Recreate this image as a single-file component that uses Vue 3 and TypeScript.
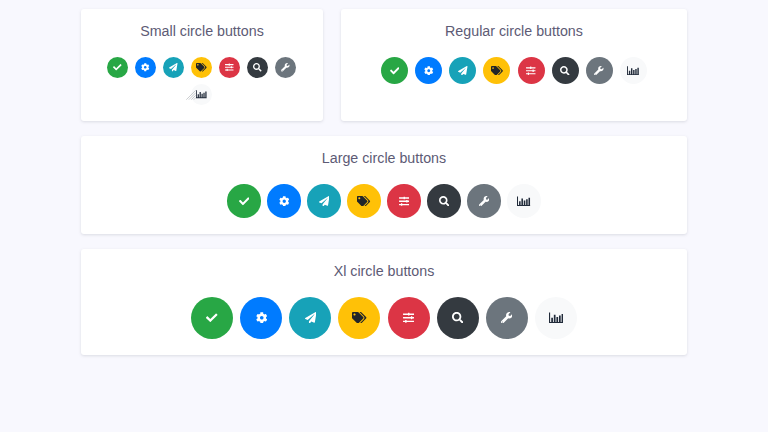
<script setup lang="ts">
interface Icon { name: string; bg: string; fg: string; vb: string; d: string }
const paths: Icon[] = [
  { name: 'check', bg: '#28a745', fg: '#fff', vb: '0 0 512 512', d: 'M173.898 439.404l-166.4-166.4c-9.997-9.997-9.997-26.206 0-36.204l36.203-36.204c9.997-9.998 26.207-9.998 36.204 0L192 312.69 432.095 72.596c9.997-9.997 26.207-9.997 36.204 0l36.203 36.204c9.997 9.997 9.997 26.206 0 36.204l-294.4 294.401c-9.998 9.997-26.207 9.997-36.204-.001z' },
  { name: 'cog', bg: '#007bff', fg: '#fff', vb: '0 0 512 512', d: 'M487.4 315.7l-42.6-24.6c4.3-23.2 4.3-47 0-70.2l42.6-24.6c4.9-2.8 7.1-8.6 5.5-14-11.1-35.6-30-67.8-54.7-94.6-3.8-4.1-10-5.1-14.8-2.3L380.8 110c-17.9-15.4-38.5-27.3-60.8-35.1V25.8c0-5.6-3.9-10.5-9.4-11.7-36.7-8.2-74.3-7.8-109.2 0-5.5 1.2-9.4 6.1-9.4 11.7V75c-22.2 7.9-42.8 19.8-60.8 35.1L88.7 85.5c-4.9-2.8-11-1.9-14.8 2.3-24.7 26.7-43.6 58.9-54.7 94.6-1.7 5.4.6 11.2 5.5 14L67.3 221c-4.3 23.2-4.3 47 0 70.2l-42.6 24.6c-4.9 2.8-7.1 8.6-5.5 14 11.1 35.6 30 67.8 54.7 94.6 3.8 4.1 10 5.1 14.8 2.3l42.6-24.6c17.9 15.4 38.5 27.3 60.8 35.1v49.2c0 5.6 3.9 10.5 9.4 11.7 36.7 8.2 74.3 7.8 109.2 0 5.5-1.2 9.4-6.1 9.4-11.7v-49.2c22.2-7.9 42.8-19.8 60.8-35.1l42.6 24.6c4.9 2.8 11 1.9 14.8-2.3 24.7-26.7 43.6-58.9 54.7-94.6 1.5-5.5-.7-11.3-5.6-14.1zM256 336c-44.1 0-80-35.9-80-80s35.9-80 80-80 80 35.9 80 80-35.9 80-80 80z' },
  { name: 'plane', bg: '#17a2b8', fg: '#fff', vb: '0 0 512 512', d: 'M476 3.2L12.5 270.6c-18.1 10.4-15.8 35.6 2.2 43.2L121 358.4l287.3-253.2c5.5-4.9 13.3 2.6 8.6 8.3L176 407v80.5c0 23.6 28.5 32.9 42.5 15.8L282 426l124.6 52.2c14.2 6 30.4-2.9 33-18.2l72-432C515 7.8 493.3-6.8 476 3.2z' },
  { name: 'tags', bg: '#ffc107', fg: '#212529', vb: '0 0 640 512', d: 'M497.941 225.941L286.059 14.059A48 48 0 0 0 252.118 0H48C21.49 0 0 21.49 0 48v204.118a48 48 0 0 0 14.059 33.941l211.882 211.882c18.744 18.745 49.136 18.746 67.882 0l204.118-204.118c18.745-18.745 18.745-49.137 0-67.882zM112 160c-26.51 0-48-21.49-48-48s21.49-48 48-48 48 21.49 48 48-21.49 48-48 48zm513.941 133.823L421.823 497.941c-18.745 18.745-49.137 18.745-67.882 0l-.36-.36L527.64 323.522c16.999-16.999 26.36-39.6 26.36-63.64s-9.362-46.641-26.36-63.64L331.397 0h48.721a48 48 0 0 1 33.941 14.059l211.882 211.882c18.745 18.745 18.745 49.137 0 67.882z' },
  { name: 'sliders', bg: '#dc3545', fg: '#fff', vb: '0 0 512 512', d: 'M496 384H160v-16c0-8.8-7.2-16-16-16h-32c-8.8 0-16 7.2-16 16v16H16c-8.8 0-16 7.2-16 16v32c0 8.8 7.2 16 16 16h80v16c0 8.8 7.2 16 16 16h32c8.8 0 16-7.2 16-16v-16h336c8.8 0 16-7.2 16-16v-32c0-8.8-7.2-16-16-16zm0-160h-80v-16c0-8.8-7.2-16-16-16h-32c-8.8 0-16 7.2-16 16v16H16c-8.8 0-16 7.2-16 16v32c0 8.8 7.2 16 16 16h336v16c0 8.8 7.2 16 16 16h32c8.8 0 16-7.2 16-16v-16h80c8.8 0 16-7.2 16-16v-32c0-8.8-7.2-16-16-16zm0-160H288V48c0-8.8-7.2-16-16-16h-32c-8.8 0-16 7.2-16 16v16H16C7.2 64 0 71.2 0 80v32c0 8.8 7.2 16 16 16h208v16c0 8.8 7.2 16 16 16h32c8.8 0 16-7.2 16-16v-16h208c8.8 0 16-7.2 16-16V80c0-8.8-7.2-16-16-16z' },
  { name: 'search', bg: '#343a40', fg: '#fff', vb: '0 0 512 512', d: 'M505 442.7L405.3 343c-4.5-4.5-10.6-7-17-7H372c27.6-35.3 44-79.7 44-128C416 93.1 322.9 0 208 0S0 93.1 0 208s93.1 208 208 208c48.3 0 92.7-16.4 128-44v16.3c0 6.4 2.5 12.5 7 17l99.7 99.7c9.4 9.4 24.6 9.4 33.9 0l28.3-28.3c9.4-9.4 9.4-24.6.1-34zM208 336c-70.7 0-128-57.2-128-128 0-70.7 57.2-128 128-128 70.7 0 128 57.2 128 128 0 70.7-57.2 128-128 128z' },
  { name: 'wrench', bg: '#6c757d', fg: '#fff', vb: '0 0 512 512', d: 'M507.73 109.1c-2.24-9.03-13.54-12.09-20.12-5.51l-74.36 74.36-67.88-11.31-11.31-67.88 74.36-74.36c6.62-6.62 3.43-17.9-5.66-20.16-47.38-11.74-99.55.91-136.58 37.93-39.64 39.64-50.55 97.1-34.05 147.2L18.74 402.76c-24.99 24.99-24.99 65.51 0 90.5 24.99 24.99 65.51 24.99 90.5 0l213.21-213.21c50.12 16.71 107.47 5.68 147.37-34.22 37.07-37.07 49.7-89.32 37.91-136.73zM64 472c-13.25 0-24-10.75-24-24 0-13.26 10.75-24 24-24s24 10.74 24 24c0 13.25-10.75 24-24 24z' },
  { name: 'chart', bg: '#f8f9fa', fg: '#212b3a', vb: '0 0 640 512', d: 'M0 20h50v420h590v50H0zM100 260h76v180h-76zM215 120h76v320h-76zM330 220h76v220h-76zM445 160h76v280h-76zM560 90h76v350h-76z' },
]
const cards = [
  { title: 'Small circle buttons', size: 'sm' },
  { title: 'Regular circle buttons', size: 'md' },
  { title: 'Large circle buttons', size: 'lg' },
  { title: 'Xl circle buttons', size: 'xl' },
]
</script>

<template>
  <main class="page">
    <div class="top">
      <section v-for="c in cards.slice(0, 2)" :key="c.size" class="card" :class="c.size">
        <h2>{{ c.title }}</h2>
        <div class="row">
          <button v-for="p in paths" :key="p.name" type="button" class="btn" :style="{ background: p.bg }" :aria-label="p.name">
            <svg :viewBox="p.vb" :fill="p.fg"><path :d="p.d" /></svg>
            <svg v-if="c.size === 'sm' && p.name === 'chart'" class="hatch" viewBox="0 0 10 10" stroke="#a9adb0" stroke-width="0.6" fill="none">
              <path d="M0.3 9.7L9.7 0.3M2.8 9.7L9.7 2.8M5.3 9.7L9.7 5.3M7.8 9.7L9.7 7.8" />
            </svg>
          </button>
        </div>
      </section>
    </div>
    <section v-for="c in cards.slice(2)" :key="c.size" class="card" :class="c.size">
      <h2>{{ c.title }}</h2>
      <div class="row">
        <button v-for="p in paths" :key="p.name" type="button" class="btn" :style="{ background: p.bg }" :aria-label="p.name">
          <svg :viewBox="p.vb" :fill="p.fg"><path :d="p.d" /></svg>
        </button>
      </div>
    </section>
  </main>
</template>

<style>
html, body { background: #f8f8fe; }
</style>

<style scoped>
.page {
  box-sizing: border-box;
  width: 606px;
  margin: 0 auto;
  padding: 9px 0 20px;
  display: flex;
  flex-direction: column;
  gap: 15px;
  font-family: "Liberation Sans", Arial, sans-serif;
}
.top { display: flex; gap: 18px; align-items: stretch; }
.top .sm { width: 242px; flex: none; }
.top .md { flex: 1; }
.card {
  box-sizing: border-box;
  background: #fff;
  border-radius: 3px;
  box-shadow: 0 1px 3px rgba(90, 97, 105, 0.18);
  padding: 13px 20px 16px;
}
h2 {
  margin: 0;
  font-size: 14.25px;
  line-height: 18px;
  font-weight: 400;
  color: #5d5b75;
  text-align: center;
}
.row {
  display: flex;
  flex-wrap: wrap;
  justify-content: center;
  margin-top: 17px;
}
.btn {
  position: relative;
  border: 0;
  padding: 0;
  border-radius: 50%;
  display: flex;
  align-items: center;
  justify-content: center;
}
.btn svg { display: block; width: auto; }
.hatch { position: absolute; left: -5px; top: 0; width: 10px !important; height: 10px !important; margin-top: 6px; }
.sm .row { gap: 6px 7px; position: relative; left: -0.5px; }
.sm .btn { width: 21px; height: 21px; }
.sm .btn svg { height: 8.5px; }
.md .row { gap: 7.1px; }
.md .btn { width: 27px; height: 27px; }
.md .btn svg { height: 9.5px; }
.lg .row { gap: 6.5px; }
.lg .btn { width: 33.5px; height: 33.5px; }
.lg .btn svg { height: 10.5px; }
.xl .row { gap: 7.1px; }
.xl .btn { width: 42px; height: 42px; }
.xl .btn svg { height: 11.5px; }
</style>
